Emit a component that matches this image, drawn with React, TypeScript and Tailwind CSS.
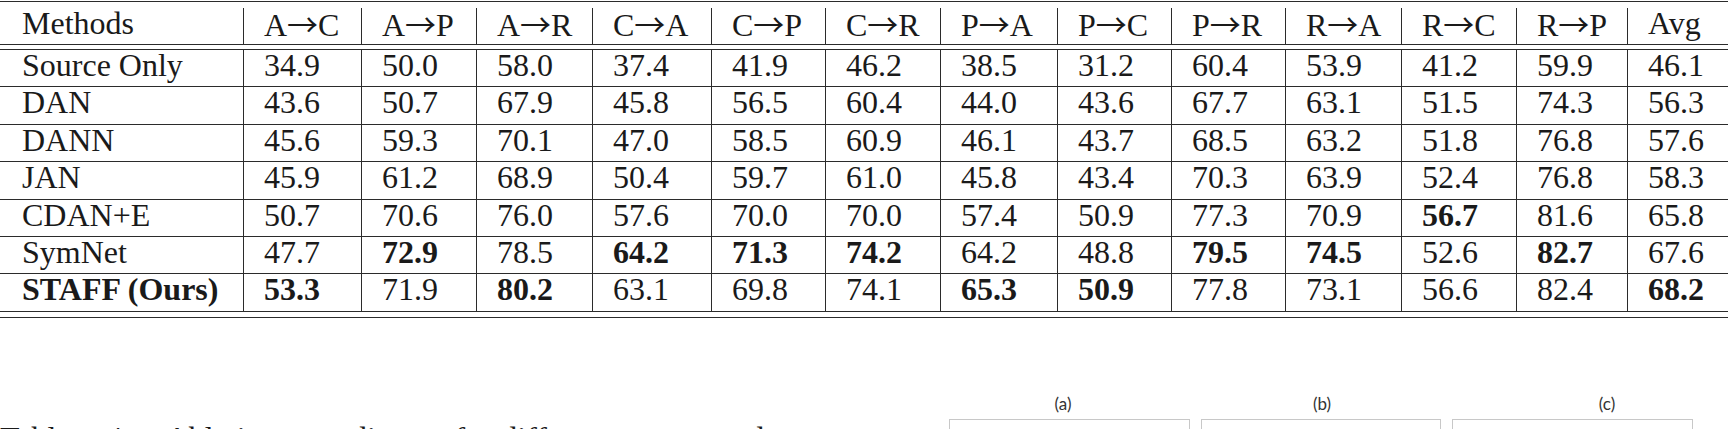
import React from "react";

const cols =
    "grid grid-cols-[243px_118px_115px_116px_119px_114px_115px_117px_114px_114px_116px_115px_111px_1fr]";

const pairs = [
    ["A", "C"],
    ["A", "P"],
    ["A", "R"],
    ["C", "A"],
    ["C", "P"],
    ["C", "R"],
    ["P", "A"],
    ["P", "C"],
    ["P", "R"],
    ["R", "A"],
    ["R", "C"],
    ["R", "P"],
];

// "*" marks a bold (best) result
const rows: string[][] = [
    ["Source Only", "34.9", "50.0", "58.0", "37.4", "41.9", "46.2", "38.5", "31.2", "60.4", "53.9", "41.2", "59.9", "46.1"],
    ["DAN", "43.6", "50.7", "67.9", "45.8", "56.5", "60.4", "44.0", "43.6", "67.7", "63.1", "51.5", "74.3", "56.3"],
    ["DANN", "45.6", "59.3", "70.1", "47.0", "58.5", "60.9", "46.1", "43.7", "68.5", "63.2", "51.8", "76.8", "57.6"],
    ["JAN", "45.9", "61.2", "68.9", "50.4", "59.7", "61.0", "45.8", "43.4", "70.3", "63.9", "52.4", "76.8", "58.3"],
    ["CDAN+E", "50.7", "70.6", "76.0", "57.6", "70.0", "70.0", "57.4", "50.9", "77.3", "70.9", "*56.7", "81.6", "65.8"],
    ["SymNet", "47.7", "*72.9", "78.5", "*64.2", "*71.3", "*74.2", "64.2", "48.8", "*79.5", "*74.5", "52.6", "*82.7", "67.6"],
    ["*STAFF (Ours)", "*53.3", "71.9", "*80.2", "63.1", "69.8", "74.1", "*65.3", "*50.9", "77.8", "73.1", "56.6", "82.4", "*68.2"],
];

const Cell = ({ index, children }: { index: number; children: React.ReactNode }) => {
    return (
        <div
            className={
                index === 0
                    ? "pl-[22px] whitespace-nowrap"
                    : "pl-[20px] whitespace-nowrap border-l-[1.5px] border-[#2b2b2b]"
            }
        >
            {children}
        </div>
    );
};

const Value = ({ text }: { text: string }) => {
    if (text.startsWith("*")) return <span className="font-bold">{text.slice(1)}</span>;
    return <span>{text}</span>;
};

const Rule = () => <div className="h-[1.5px] bg-[#2b2b2b]" />;

export default function App() {
    return (
        <div className="w-[1728px] h-[429px] overflow-hidden bg-white text-[#1a1a1a] font-['Liberation_Serif',serif]">
            {/* table */}
            <div className="pt-[0.5px] text-[32px] leading-[30px]">
                <Rule />
                <div className="h-[2px]" />
                <div className={`${cols} h-[41px] pt-[4px] border-b-[1.5px] border-[#2b2b2b]`}>
                    <Cell index={0}>Methods</Cell>
                    {pairs.map(([a, b], i) => (
                        <Cell key={a + b} index={i + 1}>
                            {a}
                            <span className="font-['Noto_Sans_CJK_JP',sans-serif] text-[31px]">→</span>
                            {b}
                        </Cell>
                    ))}
                    <Cell index={13}>Avg</Cell>
                </div>
                <div className="h-[3.5px]" />
                <Rule />
                {rows.map((row) => (
                    <div
                        key={row[0]}
                        className={`${cols} h-[37.4px] border-b-[1.5px] border-[#2b2b2b]`}
                    >
                        {row.map((v, i) => (
                            <Cell key={i} index={i}>
                                <Value text={v} />
                            </Cell>
                        ))}
                    </div>
                ))}
                <div className="h-[5px]" />
                <Rule />
            </div>

            {/* caption + figure */}
            <div className="flex">
                <div className="w-[940px] shrink-0 pt-[104px]">
                    <p className="text-[32px] leading-[32px] whitespace-nowrap [word-spacing:28px]">
                        Table 4: Ablation studies of different proposed
                    </p>
                </div>
                <div className="ml-[9px] pt-[76px] font-['Lato',sans-serif] text-[17px] leading-[20px] text-[#333]">
                    <div className="flex">
                        <span className="ml-[94px] w-[40px] text-center">(a)</span>
                        <span className="ml-[219px] w-[40px] text-center">(b)</span>
                        <span className="ml-[245px] w-[40px] text-center">(c)</span>
                    </div>
                    <div className="mt-[5px] flex gap-[11px]">
                        <div className="w-[241px] h-[100px] border border-[#c8c8c8]" />
                        <div className="w-[240px] h-[100px] border border-[#c8c8c8]" />
                        <div className="w-[241px] h-[100px] border border-[#c8c8c8]" />
                    </div>
                </div>
            </div>
        </div>
    );
}
